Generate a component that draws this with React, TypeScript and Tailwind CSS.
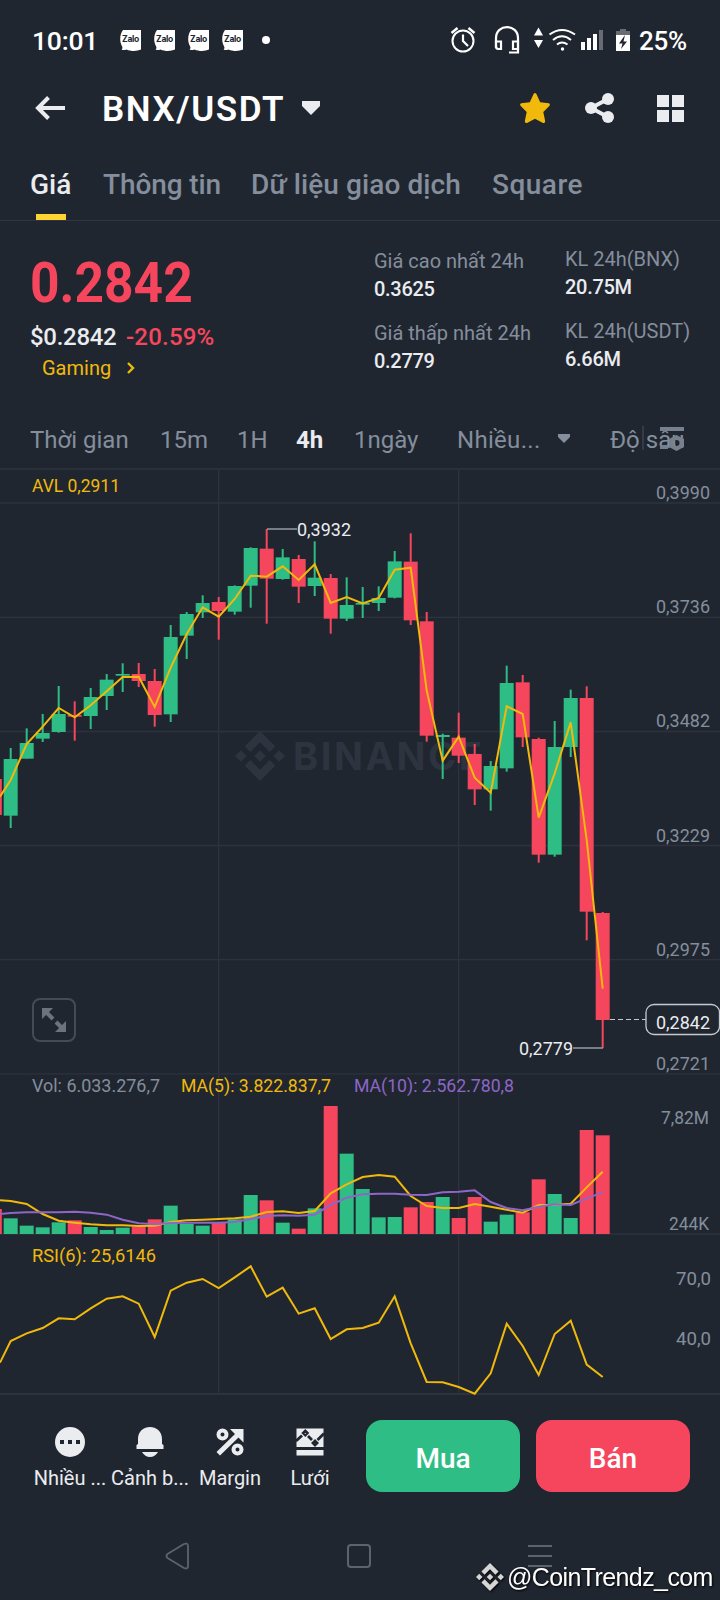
import React from "react";

const GREEN = "#2ebd85";
const RED = "#f6465d";
const YELLOW = "#f0b90b";
const PURPLE = "#8d66c7";
const GRID = "#2c333e";

// Chart geometry: one candle every 16px, y values are stored in thirds of a pixel
const STEP = 16;
const FIRST_X = 10.7;
const LOWER_TOP = 590;

const cx = (i: number) => FIRST_X + i * STEP;

// [high, body top, body bottom, low, up]
const candles: [number, number, number, number, number][] = [
  [834, 867, 1037, 1074, 1],
  [775, 819, 866, 866, 1],
  [732, 789, 806, 816, 1],
  [648, 732, 786, 788, 1],
  [694, 735, 740, 812, 0],
  [654, 681, 738, 777, 1],
  [612, 629, 678, 720, 1],
  [580, 612, 617, 666, 1],
  [579, 612, 633, 651, 0],
  [597, 633, 735, 770, 0],
  [465, 501, 733, 756, 1],
  [426, 432, 497, 567, 1],
  [376, 399, 427, 444, 1],
  [381, 396, 423, 509, 0],
  [346, 348, 425, 434, 1],
  [232, 234, 347, 413, 1],
  [177, 236, 326, 461, 0],
  [237, 262, 327, 329, 1],
  [255, 267, 350, 399, 0],
  [214, 323, 348, 378, 1],
  [312, 324, 446, 491, 0],
  [322, 405, 446, 453, 1],
  [351, 399, 404, 444, 1],
  [349, 384, 399, 423, 1],
  [243, 274, 383, 385, 1],
  [190, 275, 451, 465, 0],
  [426, 454, 797, 815, 0],
  [791, 795, 801, 927, 1],
  [728, 803, 857, 879, 0],
  [822, 852, 958, 1005, 0],
  [873, 888, 958, 1022, 1],
  [587, 639, 895, 905, 1],
  [615, 637, 802, 831, 0],
  [803, 807, 1154, 1178, 0],
  [753, 831, 1154, 1160, 1],
  [659, 684, 831, 861, 1],
  [649, 684, 1325, 1411, 0],
  [1326, 1329, 1650, 1734, 0],
];

const avl = [
  930, 822, 770, 714, 742, 706, 664, 621, 620, 711, 593, 492, 412, 440, 387, 317, 320, 289, 330, 283, 399, 381, 400,
  384, 299, 293, 662, 872, 800, 923, 968, 709, 732, 1043, 910, 757, 1110, 1556,
];

const volume = [
  475, 497, 502, 487, 481, 501, 510, 503, 500, 478, 437, 491, 497, 487, 478, 405, 421, 488, 506, 445, 138, 281, 387,
  472, 471, 442, 426, 411, 474, 411, 485, 464, 457, 358, 402, 474, 210, 226,
];

const ma5 = [
  423, 432, 462, 482, 488, 493, 496, 496, 498, 497, 486, 481, 479, 477, 475, 470, 456, 454, 459, 453, 400, 373, 351,
  345, 350, 408, 438, 444, 444, 432, 440, 449, 458, 435, 434, 431, 382, 335,
];

const ma10 = [
  459, 457, 457, 457, 455, 458, 464, 479, 490, 493, 489, 488, 488, 488, 486, 477, 468, 466, 467, 464, 435, 413, 403,
  401, 401, 404, 405, 397, 395, 391, 426, 444, 451, 440, 433, 435, 415, 397,
];

const rsi = [
  843, 820, 804, 775, 778, 745, 716, 709, 731, 831, 692, 668, 657, 684, 652, 619, 710, 683, 761, 745, 837, 808, 804,
  788, 709, 850, 966, 967, 981, 1001, 940, 791, 858, 945, 822, 782, 914, 951,
];

const toPoints = (start: number, values: number[]) =>
  [`0,${start / 3}`, ...values.map((v, i) => `${cx(i)},${v / 3}`)].join(" ");

const tabs = [
  { label: "Giá", cls: "w-[73px] text-[#eaecef]" },
  { label: "Thông tin", cls: "w-[148px] text-[#848e9c] tracking-[-0.1px]" },
  { label: "Dữ liệu giao dịch", cls: "w-[241px] text-[#848e9c] tracking-[0.1px]" },
  { label: "Square", cls: "text-[#848e9c] tracking-[0.5px]" },
];

const statColumns = [
  {
    cls: "w-[191px] pt-[26px]",
    stats: [
      { label: "Giá cao nhất 24h", value: "0.3625" },
      { label: "Giá thấp nhất 24h", value: "0.2779" },
    ],
  },
  {
    cls: "pt-[24px]",
    stats: [
      { label: "KL 24h(BNX)", value: "20.75M" },
      { label: "KL 24h(USDT)", value: "6.66M" },
    ],
  },
];

const priceTicks = ["0,3990", "0,3736", "0,3482", "0,3229", "0,2975", "0,2721"];

function BinanceMark({ className }: { className: string }) {
  return (
    <svg viewBox="0 0 50 50" className={className} fill="currentColor">
      <path d="M25 0 L40.3 15.3 L34.7 20.9 L25 11.2 L15.3 20.9 L9.7 15.3 Z" />
      <path d="M25 50 L40.3 34.7 L34.7 29.1 L25 38.8 L15.3 29.1 L9.7 34.7 Z" />
      <path d="M25 19.2 L30.8 25 L25 30.8 L19.2 25 Z" />
      <path d="M5.8 19.2 L11.6 25 L5.8 30.8 L0 25 Z" />
      <path d="M44.2 19.2 L50 25 L44.2 30.8 L38.4 25 Z" />
    </svg>
  );
}

// Chart text is condensed to its measured width
function Label({ x, y, w, fill, children }: { x: number; y: number; w: number; fill: string; children: string }) {
  return (
    <text x={x} y={y} textLength={w} lengthAdjust="spacingAndGlyphs" fill={fill}>
      {children}
    </text>
  );
}

function ZaloBadge() {
  return (
    <div className="relative flex h-[21px] w-[21px] items-center justify-center">
      <svg viewBox="0 0 21 21" className="absolute inset-0" fill="#fff">
        <path d="M3 0H21V19.5C17 21.3 11 21.4 6.5 19.4C4.8 20.3 3 20.3 1.6 19.6C2.6 18.7 2.7 17.5 2 16.2C-.6 11.5 -.5 5 3 0Z" />
      </svg>
      <span className="relative -top-px font-[Inter] text-[8.5px] font-bold tracking-[-0.3px] text-[#202630]">Zalo</span>
    </div>
  );
}

function StatusBar() {
  return (
    <div className="flex h-20 items-center pl-[32px]">
      <span className="w-[88px] pt-[2px] text-[26.5px] font-medium tracking-[-0.2px] text-white">10:01</span>
      <div className="flex gap-[13px]">
        <ZaloBadge />
        <ZaloBadge />
        <ZaloBadge />
        <ZaloBadge />
      </div>
      <div className="ml-[19px] h-2 w-2 rounded-full bg-white" />
      <svg viewBox="0 0 187 40" className="ml-[178px] h-10 w-[187px] shrink-0">
        {/* Alarm */}
        <g fill="none" stroke="#fff" strokeWidth="2">
          <circle cx="15" cy="21" r="10.5" />
          <path d="M15 14.500V21L20 26" strokeWidth="2.2" />
          <path d="M3.500 13L9.500 8M26.500 13L20.500 8" strokeWidth="2.4" />
        </g>
        {/* Headset */}
        <g fill="none" stroke="#fff" strokeWidth="2.2">
          <path d="M48 28V18C48 3.500 70 3.500 70 18V32.500H61" />
          <path d="M48 21.500H53V29H50.500Q48 29 48 26.500ZM70 21.500H65V29H70Z" />
        </g>
        {/* Data arrows */}
        <path d="M86 15.500L90.500 7.500L95 15.500ZM86 20H95L90.500 28Z" fill="#fff" />
        {/* Wifi */}
        <g fill="none" stroke="#fff" strokeWidth="2">
          <path d="M101.500 14.500Q114 5.500 127 14.500" />
          <path d="M105 20Q114 12.500 123 20" />
          <path d="M109 24.500Q114 20.500 119.500 24.500" />
        </g>
        <circle cx="114.5" cy="29" r="1.7" fill="#fff" />
        {/* Signal */}
        <path d="M133 22h4v8h-4zM139 18h4v12h-4zM145 14h4v16h-4z" fill="#fff" />
        <path d="M151 10h4v20h-4z" fill="#666b74" />
        {/* Battery */}
        <path d="M168 16V11H172V9H178V11H182V16Z" fill="#666b74" />
        <path d="M168 15H182V31H168Z" fill="#fff" />
        <path d="M177 15L171 23.500H174.500L173 29L179 21.500H175.500Z" fill="#202630" />
      </svg>
      <span className="ml-[4px] pt-[2px] text-[26px] font-medium tracking-[-0.3px] text-white">25%</span>
    </div>
  );
}

function Header() {
  return (
    <div className="flex h-[59px] items-center pb-[3px] pl-[35px] text-[#eaecef]">
      <svg viewBox="0 0 30 24" className="h-6 w-[30px]" fill="none" stroke="currentColor" strokeWidth="4">
        <path d="M30 12H3M13.500 1.500L3 12L13.500 22.500" />
      </svg>
      <h1 className="ml-[37px] w-[200px] pt-[5px] text-[35px] font-semibold tracking-[1.6px] text-white">BNX/USDT</h1>
      <svg viewBox="0 0 18 14" className="h-[14px] w-[18px]" fill="currentColor">
        <path d="M0 0H18V5L9 14L0 5Z" />
      </svg>
      <svg viewBox="0 0 30 30" className="ml-[200px] h-[30px] w-[30px]" fill={YELLOW}>
        <path d="M13.700 .8Q15 -.8 16.300 .8L20.200 9.200L28.800 10.300Q30.500 11 29.500 12.700L23.300 19L25.200 28.300Q25 30.500 23 30L15 25.700L7 30Q5 30.500 4.800 28.300L6.700 19L.5 12.700Q-.5 11 1.200 10.300L9.800 9.200Z" />
      </svg>
      <svg viewBox="0 0 29 30" className="ml-[35px] h-[30px] w-[29px]" fill="currentColor">
        <path d="M23 6L6 15L23 24" fill="none" stroke="currentColor" strokeWidth="4" />
        <circle cx="23" cy="6" r="6" />
        <circle cx="6" cy="15" r="6" />
        <circle cx="23" cy="24" r="6" />
      </svg>
      <div className="ml-[43px] grid grid-cols-2 gap-[3px]">
        {[0, 1, 2, 3].map((i) => (
          <div key={i} className="h-3 w-3 bg-current" />
        ))}
      </div>
    </div>
  );
}

function PriceSummary() {
  return (
    <div className="flex h-[178px] pl-[30px]">
      <div className="w-[344px]">
        <div className="flex h-[102px] origin-left scale-x-[0.92] items-center pt-[22px] text-[56px] font-bold text-[#f6465d]">
          0.2842
        </div>
        <div className="flex h-[28px] items-center text-[24px] font-medium text-[#eaecef]">
          <span className="w-[96px] tracking-[-0.3px]">$0.2842</span>
          <span className="tracking-[0.2px] text-[#f6465d]">-20.59%</span>
        </div>
        <div className="mt-[3px] flex h-[28px] items-center pl-[12px] text-[20px] text-[#f0b90b]">
          <span className="w-[85px]">Gaming</span>
          <svg viewBox="0 0 8 12" className="h-3 w-2" fill="none" stroke="currentColor" strokeWidth="2.4">
            <path d="M1 1L6 6L1 11" />
          </svg>
        </div>
      </div>
      {statColumns.map((col, i) => (
        <div key={i} className={col.cls}>
          {col.stats.map((s) => (
            <div key={s.label} className="mb-[16px] text-[20px] leading-[28px] whitespace-nowrap">
              <div className="text-[#848e9c]">{s.label}</div>
              <div className="font-medium tracking-[-0.3px] text-[#eaecef]">{s.value}</div>
            </div>
          ))}
        </div>
      ))}
    </div>
  );
}

function Timeframes() {
  return (
    <div className="relative flex h-[71px] items-center border-b-2 border-[#2a303b] pt-[13px] pl-[30px] text-[24px] whitespace-nowrap text-[#848e9c]">
      <span className="w-[130px]">Thời gian</span>
      <span className="w-[77px]">15m</span>
      <span className="w-[59px]">1H</span>
      <span className="w-[58px] font-bold text-[#eaecef]">4h</span>
      <span className="w-[103px]">1ngày</span>
      <span className="w-[101px] tracking-[0.3px]">Nhiều...</span>
      <svg viewBox="0 0 12 9" className="mb-[4px] h-[9px] w-[12px]" fill="currentColor">
        <path d="M0 0H12V3L6 9L0 3Z" />
      </svg>
      <span className="ml-[40px]">Độ sâu</span>
      <div className="absolute top-[27px] left-[642px] h-[24px] w-[2px] bg-[#343b47]" />
      <svg viewBox="0 0 24 24" className="absolute top-[28px] left-[660px] h-6 w-6" fill="#76808f">
        <path d="M0 0H24V4H0ZM0 18H8V22H0Z" />
        <path fillRule="evenodd" d="M16.500 8L24 12V20L16.500 24L9 20V12ZM16.500 13A3 3 0 1 0 16.500 19A3 3 0 1 0 16.500 13Z" />
      </svg>
    </div>
  );
}

function Chart() {
  return (
    <div className="relative h-[926px]">
      <div className="absolute top-[261px] left-[235px] flex h-[50px] items-center text-[#2d343f]">
        <BinanceMark className="h-[50px] w-[50px]" />
        <span className="ml-[8px] font-[Inter] text-[38px] font-bold tracking-[2.6px]">BINANCE</span>
      </div>
      <svg viewBox="0 0 720 926" className="absolute inset-0 overflow-visible font-[Roboto] text-[19px]">
        {/* Grid */}
        <g stroke={GRID} strokeWidth="1.3">
          {[33, 147.3, 261.5, 375.5, 489.7, 603.8].map((y) => (
            <line key={y} x1="0" x2="720" y1={y} y2={y} />
          ))}
          <line x1="0" x2="720" y1="764" y2="764" />
          <line x1="0" x2="720" y1="924" y2="924" strokeWidth="2" />
          <line x1="218.6" x2="218.6" y1="0" y2="924" />
          <line x1="458.6" x2="458.6" y1="0" y2="924" />
        </g>

        {/* Candles */}
        <rect x="-12" y="309" width="13.8" height="36" fill={RED} />
        {candles.map(([high, top, bottom, low, up], i) => (
          <g key={i} fill={up ? GREEN : RED}>
            <rect x={cx(i) - 1} y={high / 3} width="2" height={(low - high) / 3} />
            <rect x={cx(i) - 7} y={top / 3} width="14" height={(bottom - top) / 3} />
          </g>
        ))}
        <polyline points={toPoints(980, avl)} fill="none" stroke={YELLOW} strokeWidth="2" />

        {/* High and low markers */}
        <path d="M267 59H297M573 578H603" stroke="#9299a5" strokeWidth="1.6" />
        <Label x={297} y={66} w={54} fill="#eaecef">0,3932</Label>
        <Label x={519} y={585} w={54} fill="#eaecef">0,2779</Label>

        {/* Price axis */}
        <Label x={32} y={22} w={88} fill={YELLOW}>AVL 0,2911</Label>
        {priceTicks.map((tick, i) => (
          <Label key={tick} x={656} y={29 + i * 114.2} w={54} fill="#848e9c">{tick}</Label>
        ))}
        <path d="M610 549.500H646" stroke="#c5c9d0" strokeDasharray="5 3" />
        <rect x="646" y="534.5" width="73.5" height="30" rx="8" fill="#202630" stroke="#c5c9d0" strokeWidth="1.3" />
        <Label x={656} y={559} w={54} fill="#eaecef">0,2842</Label>

        {/* Expand */}
        <g stroke="#444b56" fill="none">
          <rect x="33" y="529" width="42" height="42" rx="7" strokeWidth="2" />
          <path d="M45 541L53 549M56 552L64 560" stroke="#6b737f" strokeWidth="4" />
          <path d="M42 538H53L42 549ZM66 562H55L66 551Z" fill="#6b737f" stroke="none" />
        </g>

        {/* Volume and RSI */}
        <g transform={`translate(0 ${LOWER_TOP})`}>
          <rect x="-12" y="149" width="13.8" height="25" fill={RED} />
          {volume.map((v, i) => (
            <rect key={i} x={cx(i) - 7} y={v / 3} width="14" height={(522 - v) / 3} fill={candles[i][4] ? GREEN : RED} />
          ))}
          <g fill="none" strokeWidth="2">
            <polyline points={toPoints(421, ma5)} stroke={YELLOW} />
            <polyline points={toPoints(462, ma10)} stroke={PURPLE} />
            <polyline points={toPoints(908, rsi)} stroke={YELLOW} />
          </g>
          <Label x={32} y={32} w={128} fill="#848e9c">Vol: 6.033.276,7</Label>
          <Label x={181} y={32} w={150} fill={YELLOW}>MA(5): 3.822.837,7</Label>
          <Label x={354} y={32} w={160} fill={PURPLE}>MA(10): 2.562.780,8</Label>
          <Label x={661} y={64} w={48} fill="#848e9c">7,82M</Label>
          <Label x={669} y={170} w={40} fill="#848e9c">244K</Label>
          <Label x={32} y={202} w={124} fill={YELLOW}>RSI(6): 25,6146</Label>
          <Label x={676} y={225} w={35} fill="#848e9c">70,0</Label>
          <Label x={676} y={285} w={35} fill="#848e9c">40,0</Label>
        </g>
      </svg>
    </div>
  );
}

const actions = [
  {
    label: "Nhiều ...",
    icon: (
      <>
        <circle cx="15" cy="15" r="15" />
        <path d="M5 13h4v4H5zM13 13h4v4h-4zM21 13h4v4h-4z" fill="#202630" />
      </>
    ),
  },
  {
    label: "Cảnh b...",
    icon: <path d="M3 17V12C3 -4 27 -4 27 12V17L28.500 18V22H1.500V18ZM7 25H23Q20 30 15 30Q10 30 7 25Z" />,
  },
  {
    label: "Margin",
    icon: (
      <>
        <path d="M15 2H28.500V15.500L23.500 10.500L5 28.500L1.500 25L20 7Z" />
        <g fill="none" stroke="#eaecef" strokeWidth="4">
          <circle cx="7.5" cy="7.5" r="4" />
          <circle cx="22.5" cy="22.5" r="4" />
        </g>
      </>
    ),
  },
  {
    label: "Lưới",
    icon: (
      <>
        <path d="M1.500 1.500H28.500V20H1.500ZM1.500 23H28.500V28.500H1.500Z" />
        <path
          d="M1 14L7 8.500M8.300 6L10.300 4L12.300 6L10.300 8ZM13 9L17 13M18 16L20 14L22 16L20 18ZM22.500 13L29 6.500"
          fill="none"
          stroke="#202630"
          strokeWidth="2.8"
        />
      </>
    ),
  },
];

function ActionBar() {
  return (
    <div className="flex h-[119px] pt-[24px] pl-[30px]">
      {actions.map((a) => (
        <div key={a.label} className="flex w-20 flex-col items-center pt-[7px] text-[20px] leading-[24px] whitespace-nowrap text-[#eaecef]">
          <svg viewBox="0 0 30 30" className="mb-[9px] h-[30px] w-[30px]" fill="currentColor">
            {a.icon}
          </svg>
          {a.label}
        </div>
      ))}
      <button className="ml-[16px] h-[72px] w-[154px] rounded-2xl bg-[#2ebd85] pt-[6px] text-[28px] font-medium text-white">Mua</button>
      <button className="ml-[16px] h-[72px] w-[154px] rounded-2xl bg-[#f6465d] pt-[6px] text-[28px] font-medium text-white">Bán</button>
    </div>
  );
}

function NavBar() {
  return (
    <div className="relative flex h-[82px] items-center justify-between pr-[168px] pl-[165px]">
      <svg viewBox="0 0 25 28" className="h-7 w-[25px]" fill="none" stroke="#5c636f" strokeWidth="1.8" strokeLinejoin="round">
        <path d="M2.500 12L19 2Q23 .5 23 4V24Q23 27.500 19 26L2.500 16Q.5 14 2.500 12Z" />
      </svg>
      <div className="h-6 w-6 rounded-[4px] border-2 border-[#5c636f]" />
      <div className="flex w-6 flex-col gap-2">
        <div className="h-[2px] bg-[#5c636f]" />
        <div className="h-[2px] bg-[#5c636f]" />
        <div className="h-[2px] bg-[#5c636f]" />
      </div>
      <div className="absolute top-[46px] left-[476px] flex items-center drop-shadow-[1px_1px_1px_#000]">
        <BinanceMark className="h-7 w-7 text-[#d6d6d6]" />
        <span className="ml-[3px] font-[Liberation_Sans] text-[25px] leading-[32px] tracking-[-0.6px] text-white">@CoinTrendz_com</span>
      </div>
    </div>
  );
}

export default function App() {
  return (
    <div className="h-[1600px] w-[720px] overflow-hidden bg-[#202630] font-[Roboto,sans-serif]">
      <StatusBar />
      <Header />
      <nav className="relative flex h-[82px] items-center border-b border-[#2f3641] pt-[10px] pl-[30px] text-[28px] font-medium whitespace-nowrap">
        {tabs.map((t) => (
          <span key={t.label} className={t.cls}>{t.label}</span>
        ))}
        <div className="absolute bottom-0 left-[36px] h-[6px] w-[30px] bg-[#fcd535]" />
      </nav>
      <PriceSummary />
      <Timeframes />
      <Chart />
      <ActionBar />
      <NavBar />
    </div>
  );
}
